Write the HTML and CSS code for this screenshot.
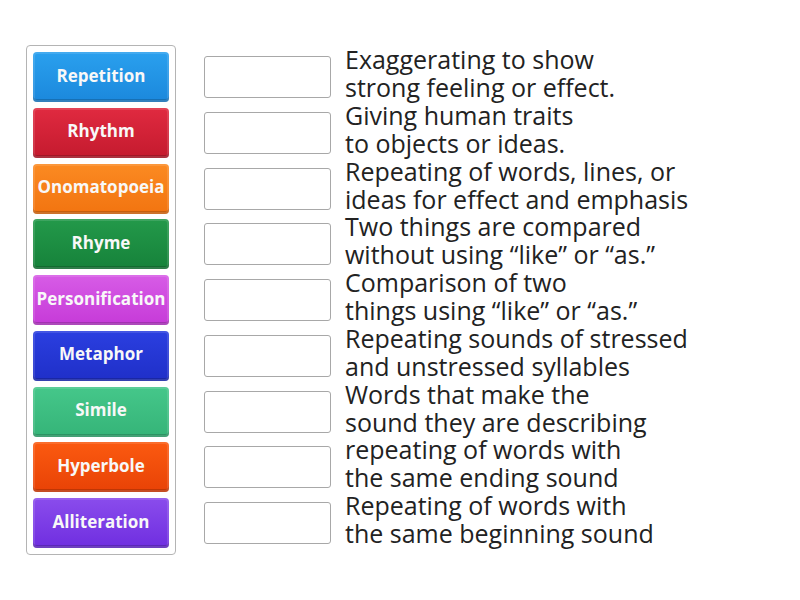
FILE: index.html
```html
<!DOCTYPE html>
<html>
	<head>
		<meta charset="UTF-8">
		<title>Match up</title>
		<link rel="stylesheet" href="styles.css">
	</head>
	<body>
		<div id="board">
			<!--左边的词语卡片-->
			<div class="tiles">
				<div class="tile t-blue">Repetition</div>
				<div class="tile t-red">Rhythm</div>
				<div class="tile t-orange">Onomatopoeia</div>
				<div class="tile t-green">Rhyme</div>
				<div class="tile t-pink">Personification</div>
				<div class="tile t-navy">Metaphor</div>
				<div class="tile t-mint">Simile</div>
				<div class="tile t-flame">Hyperbole</div>
				<div class="tile t-purple">Alliteration</div>
			</div>
			<!--右边的空格和解释-->
			<div class="rows">
				<div class="row"><div class="slot"></div><p class="def">Exaggerating to show<br>strong feeling or effect.</p></div>
				<div class="row"><div class="slot"></div><p class="def">Giving human traits<br>to objects or ideas.</p></div>
				<div class="row"><div class="slot"></div><p class="def">Repeating of words, lines, or<br>ideas for effect and emphasis</p></div>
				<div class="row"><div class="slot"></div><p class="def">Two things are compared<br>without using “like” or “as.”</p></div>
				<div class="row"><div class="slot"></div><p class="def">Comparison of two<br>things using “like” or “as.”</p></div>
				<div class="row"><div class="slot"></div><p class="def">Repeating sounds of stressed<br>and unstressed syllables</p></div>
				<div class="row"><div class="slot"></div><p class="def">Words that make the<br>sound they are describing</p></div>
				<div class="row"><div class="slot"></div><p class="def">repeating of words with<br>the same ending sound</p></div>
				<div class="row"><div class="slot"></div><p class="def">Repeating of words with<br>the same beginning sound</p></div>
			</div>
		</div>
	</body>
</html>
```

FILE: styles.css
```css
*{
	padding: 0;
	margin: 0;
	box-sizing: border-box;
}
body{
	background: #fff;
	font-family: "Open Sans", "Liberation Sans", sans-serif;
	color: #222;
}
#board{
	display: flex;
	align-items: flex-start;
	padding: 45px 0 0 26px;
}
.tiles{
	width: 150px;
	padding: 6px;
	border: 1px solid #b4b4b4;
	border-radius: 4px;
	display: flex;
	flex-direction: column;
	gap: 5.75px;
}
.tile{
	height: 50px;
	padding-bottom: 4px;
	border-radius: 4px;
	color: #f8f8f8;
	font-weight: bold;
	font-size: 17px;
	display: flex;
	align-items: center;
	justify-content: center;
	white-space: nowrap;
	box-shadow: inset 0 0 0 2px rgba(255,255,255,0.12), inset 0 -3px 0 rgba(0,0,0,0.18);
}
.t-blue{ background: linear-gradient(#2aa0ee, #1b88dc); }
.t-red{ background: linear-gradient(#e02a40, #c41a2e); }
.t-orange{ background: linear-gradient(#fb8a22, #f27410); }
.t-green{ background: linear-gradient(#23994a, #16823a); }
.t-pink{ background: linear-gradient(#d75ce6, #c63ad8); }
.t-navy{ background: linear-gradient(#2b3fe0, #1f2fc8); }
.t-mint{ background: linear-gradient(#45c78a, #35b478); }
.t-flame{ background: linear-gradient(#fb5a10, #e84206); }
.t-purple{ background: linear-gradient(#8a4cec, #6f2ee0); }

.rows{
	margin-top: 7px;
	margin-left: 28px;
	display: flex;
	flex-direction: column;
	gap: 5.75px;
}
.row{
	height: 50px;
	display: flex;
	align-items: center;
}
.slot{
	width: 127px;
	height: 42px;
	border: 1px solid #a8a8a8;
	border-radius: 3px;
	background: #fff;
	flex-shrink: 0;
}
.def{
	margin-left: 14px;
	margin-bottom: 8px;
	font-size: 25px;
	line-height: 28px;
	white-space: nowrap;
}
```
